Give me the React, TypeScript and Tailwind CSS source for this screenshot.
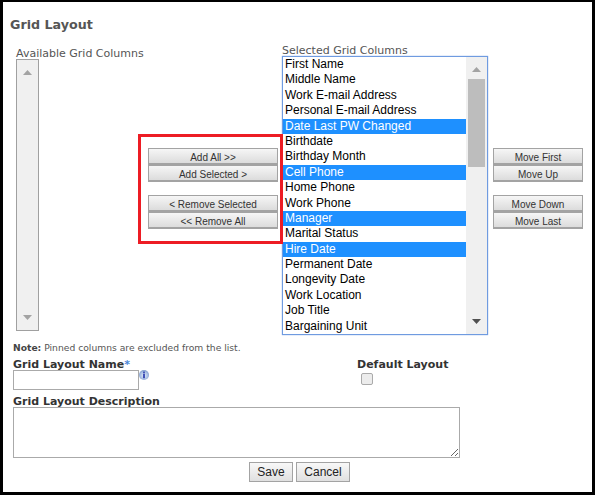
import React from "react";

const selected = [
  { label: "First Name" },
  { label: "Middle Name" },
  { label: "Work E-mail Address" },
  { label: "Personal E-mail Address" },
  { label: "Date Last PW Changed", active: true },
  { label: "Birthdate" },
  { label: "Birthday Month" },
  { label: "Cell Phone", active: true },
  { label: "Home Phone" },
  { label: "Work Phone" },
  { label: "Manager", active: true },
  { label: "Marital Status" },
  { label: "Hire Date", active: true },
  { label: "Permanent Date" },
  { label: "Longevity Date" },
  { label: "Work Location" },
  { label: "Job Title" },
  { label: "Bargaining Unit" },
];

function Arrow({ down, color }: { down?: boolean; color: string }) {
  return (
    <svg width="9" height="5" viewBox="0 0 9 5" className="block">
      <path d={down ? "M0 0H9L4.5 5Z" : "M4.5 0L9 5H0Z"} fill={color} />
    </svg>
  );
}

function ListButton({ children, className = "" }: { children: React.ReactNode; className?: string }) {
  return (
    <button className={`block w-full h-[17px] pt-[2px] border border-[#a3a3a3] border-b-2 bg-gradient-to-b from-[#f6f6f6] to-[#dcdcdc] font-['Liberation_Sans',sans-serif] text-[10px] leading-[14px] text-[#333] ${className}`}>
      {children}
    </button>
  );
}

function InfoIcon() {
  return (
    <svg width="10" height="10" viewBox="0 0 10 10">
      <defs>
        <radialGradient id="info" cx="50%" cy="55%" r="55%">
          <stop offset="0%" stopColor="#e8eff9" />
          <stop offset="65%" stopColor="#a9c0e4" />
          <stop offset="100%" stopColor="#7f9ccb" />
        </radialGradient>
      </defs>
      <circle cx="5" cy="5" r="5" fill="url(#info)" />
      <rect x="4.2" y="1.6" width="1.6" height="1.3" fill="#1c2fa8" />
      <rect x="4.2" y="3.6" width="1.6" height="4.6" fill="#1c2fa8" />
    </svg>
  );
}

export default function App() {
  return (
    <div className="relative w-[595px] h-[495px] border-t-2 border-l-[3px] border-r-[3px] border-b-[3px] border-black bg-white font-['DejaVu_Sans',sans-serif]">
      <h2 className="ml-[7px] pt-[15px] h-[41px] text-[12.7px] leading-[16px] font-bold text-[#555]">Grid Layout</h2>

      <div className="flex items-start h-[292px]">
        <div className="ml-[13px] w-[132px] shrink-0">
          <div className="mt-[4px] h-[12px] text-[11px] leading-[13px] text-[#555]">Available Grid Columns</div>
          <div className="flex flex-col justify-between items-center w-[23px] h-[272px] pt-[10px] pb-[10px] border border-[#a0a0a0] bg-[#f0f0f0]">
            <Arrow color="#a3a3a3" />
            <Arrow down color="#a3a3a3" />
          </div>
        </div>

        <div className="w-[130px] shrink-0 mt-[105px]">
          <ListButton>Add All &gt;&gt;</ListButton>
          <ListButton className="mb-[13px]">Add Selected &gt;</ListButton>
          <ListButton>&lt; Remove Selected</ListButton>
          <ListButton>&lt;&lt; Remove All</ListButton>
        </div>

        <div className="ml-[4px] w-[206px] shrink-0">
          <div className="pt-[1px] h-[13px] text-[11px] leading-[13px] text-[#555] whitespace-nowrap">Selected Grid Columns</div>
          <div className="flex h-[279px] border border-[#6f9be0] shadow-[0_0_1px_#6f9be0] font-['Liberation_Sans',sans-serif] text-[12px] leading-[15px] text-black">
            <ul className="flex-1">
              {selected.map((item) => (
                <li
                  key={item.label}
                  className={`h-[15.4px] pl-[2px] whitespace-nowrap ${item.active ? "bg-[#1e90ff] text-white" : ""}`}
                >
                  {item.label}
                </li>
              ))}
            </ul>
            <div className="flex flex-col items-center w-[21px] bg-[#f0f0f0]">
              <div className="mt-[10px] mb-[7px]">
                <Arrow color="#a3a3a3" />
              </div>
              <div className="w-[17px] h-[88px] bg-[#bdbdbd]" />
              <div className="mt-auto mb-[10px]">
                <Arrow down color="#505050" />
              </div>
            </div>
          </div>
        </div>

        <div className="ml-[5px] w-[90px] shrink-0 mt-[105px]">
          <ListButton>Move First</ListButton>
          <ListButton className="mb-[13px]">Move Up</ListButton>
          <ListButton>Move Down</ListButton>
          <ListButton>Move Last</ListButton>
        </div>
      </div>

      <p className="ml-[10px] mt-[7px] h-[12px] text-[9.2px] leading-[12px] text-[#555]">
        <b className="text-[#444]">Note:</b> Pinned columns are excluded from the list.
      </p>

      <div className="flex items-start mt-[4px] h-[37px]">
        <div className="ml-[10px] w-[344px] shrink-0">
          <label className="block h-[12px] text-[11px] leading-[13px] font-bold text-[#333]">
            Grid Layout Name<span className="text-[#4a86d8]">*</span>
          </label>
          <div className="flex items-start">
            <input className="w-[126px] h-[20px] border border-[#aaa] bg-white" />
            <InfoIcon />
          </div>
        </div>
        <div>
          <label className="block h-[14px] text-[11px] leading-[13px] font-bold text-[#333] whitespace-nowrap">Default Layout</label>
          <div className="ml-[4px] mt-[1px] w-[12px] h-[12px] rounded-[2px] border border-[#aaa] bg-[#ececec]" />
        </div>
      </div>

      <label className="block ml-[10px] h-[12px] text-[11px] leading-[13px] font-bold text-[#333]">Grid Layout Description</label>
      <textarea className="block ml-[10px] w-[447px] h-[51px] border border-[#aaa] bg-white resize" />

      <div className="flex gap-[3px] ml-[246px] mt-[4px] font-['Liberation_Sans',sans-serif] text-[12px] text-[#222]">
        <button className="w-[44px] h-[20px] border border-[#a3a3a3] bg-gradient-to-b from-[#f8f8f8] to-[#e0e0e0]">Save</button>
        <button className="w-[54px] h-[20px] border border-[#a3a3a3] bg-gradient-to-b from-[#f8f8f8] to-[#e0e0e0]">Cancel</button>
      </div>

      <div className="absolute left-[135px] top-[132px] w-[145px] h-[110px] border-[3px] border-[#ed1c24]" />
    </div>
  );
}
